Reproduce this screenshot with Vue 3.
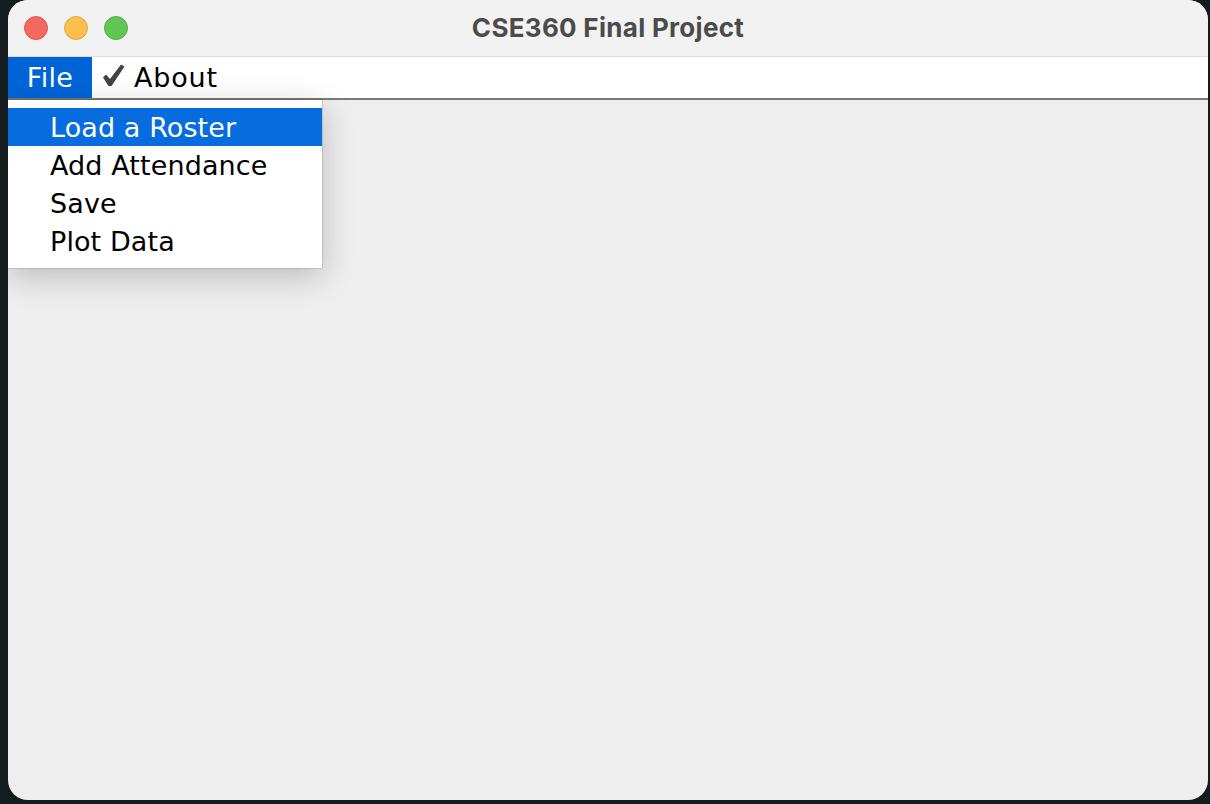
<script setup>
const items = ["Load a Roster", "Add Attendance", "Save", "Plot Data"];
</script>

<template>
  <div class="window">
    <div class="titlebar">
      <div class="lights">
        <span class="light red"></span>
        <span class="light yellow"></span>
        <span class="light green"></span>
      </div>
      <div class="title">CSE360 Final Project</div>
    </div>

    <div class="menubar">
      <div class="menu active">File</div>
      <div class="menu about">
        <svg class="check" width="24" height="24" viewBox="0 0 24 24">
          <path d="M1 13.5 L4 10.5 L8 15 L19 0.5 L22.5 2.5 L9.5 22 L6.5 22 Z" fill="#444" />
        </svg>
        <span>About</span>
      </div>
    </div>

    <div class="content">
      <div class="dropdown">
        <div
          v-for="(item, i) in items"
          :key="item"
          class="item"
          :class="{ selected: i === 0 }"
        >
          {{ item }}
        </div>
      </div>
    </div>
  </div>
</template>

<style scoped>
.window {
  width: 1200px;
  height: 800px;
  margin-left: 8px;
  border-radius: 20px;
  overflow: hidden;
  display: flex;
  flex-direction: column;
  background: #eeeeee;
}

.titlebar {
  height: 56px;
  flex-shrink: 0;
  box-sizing: content-box;
  background: #f2f2f2;
  border-bottom: 1px solid #dcdcdc;
  display: flex;
  align-items: center;
  justify-content: center;
  position: relative;
}

.lights {
  position: absolute;
  left: 16px;
  top: 16px;
  display: flex;
  gap: 16px;
}

.light {
  width: 24px;
  height: 24px;
  border-radius: 50%;
  box-sizing: border-box;
}

.red {
  background: #f2695f;
  border: 1px solid #dc5a50;
}

.yellow {
  background: #fabf4d;
  border: 1px solid #e0a63e;
}

.green {
  background: #62c655;
  border: 1px solid #52ae46;
}

.title {
  margin-bottom: 2px;
  font-family: Inter, "Liberation Sans", sans-serif;
  font-weight: 700;
  font-size: 26px;
  letter-spacing: 0.3px;
  color: #4b4b4b;
}

.menubar {
  height: 41px;
  flex-shrink: 0;
  background: #fff;
  border-bottom: 2px solid #7a7a7a;
  display: flex;
  font-family: "DejaVu Sans", sans-serif;
  font-size: 27px;
  color: #000;
}

.menu {
  display: flex;
  align-items: center;
}

.active {
  width: 84px;
  justify-content: center;
  background: #0064d8;
  color: #fff;
  letter-spacing: 0.3px;
}

.about {
  padding-left: 10px;
  gap: 8px;
}

.about span {
  letter-spacing: 0.8px;
}

.check {
  margin-top: -4px;
}

.content {
  flex: 1;
  position: relative;
}

.dropdown {
  position: absolute;
  left: 0;
  top: 0;
  width: 314px;
  height: 168px;
  box-sizing: border-box;
  padding-top: 8px;
  background: #fff;
  box-shadow: 0 8px 30px rgba(0, 0, 0, 0.22), 0 0 1px rgba(0, 0, 0, 0.6);
  font-family: "DejaVu Sans", sans-serif;
  font-size: 27px;
  letter-spacing: 0.1px;
  color: #000;
}

.item {
  height: 38px;
  line-height: 39px;
  padding-left: 42px;
}

.selected {
  background: #076cde;
  color: #fff;
}
</style>

<style>
body {
  background: #141c20;
}
</style>
